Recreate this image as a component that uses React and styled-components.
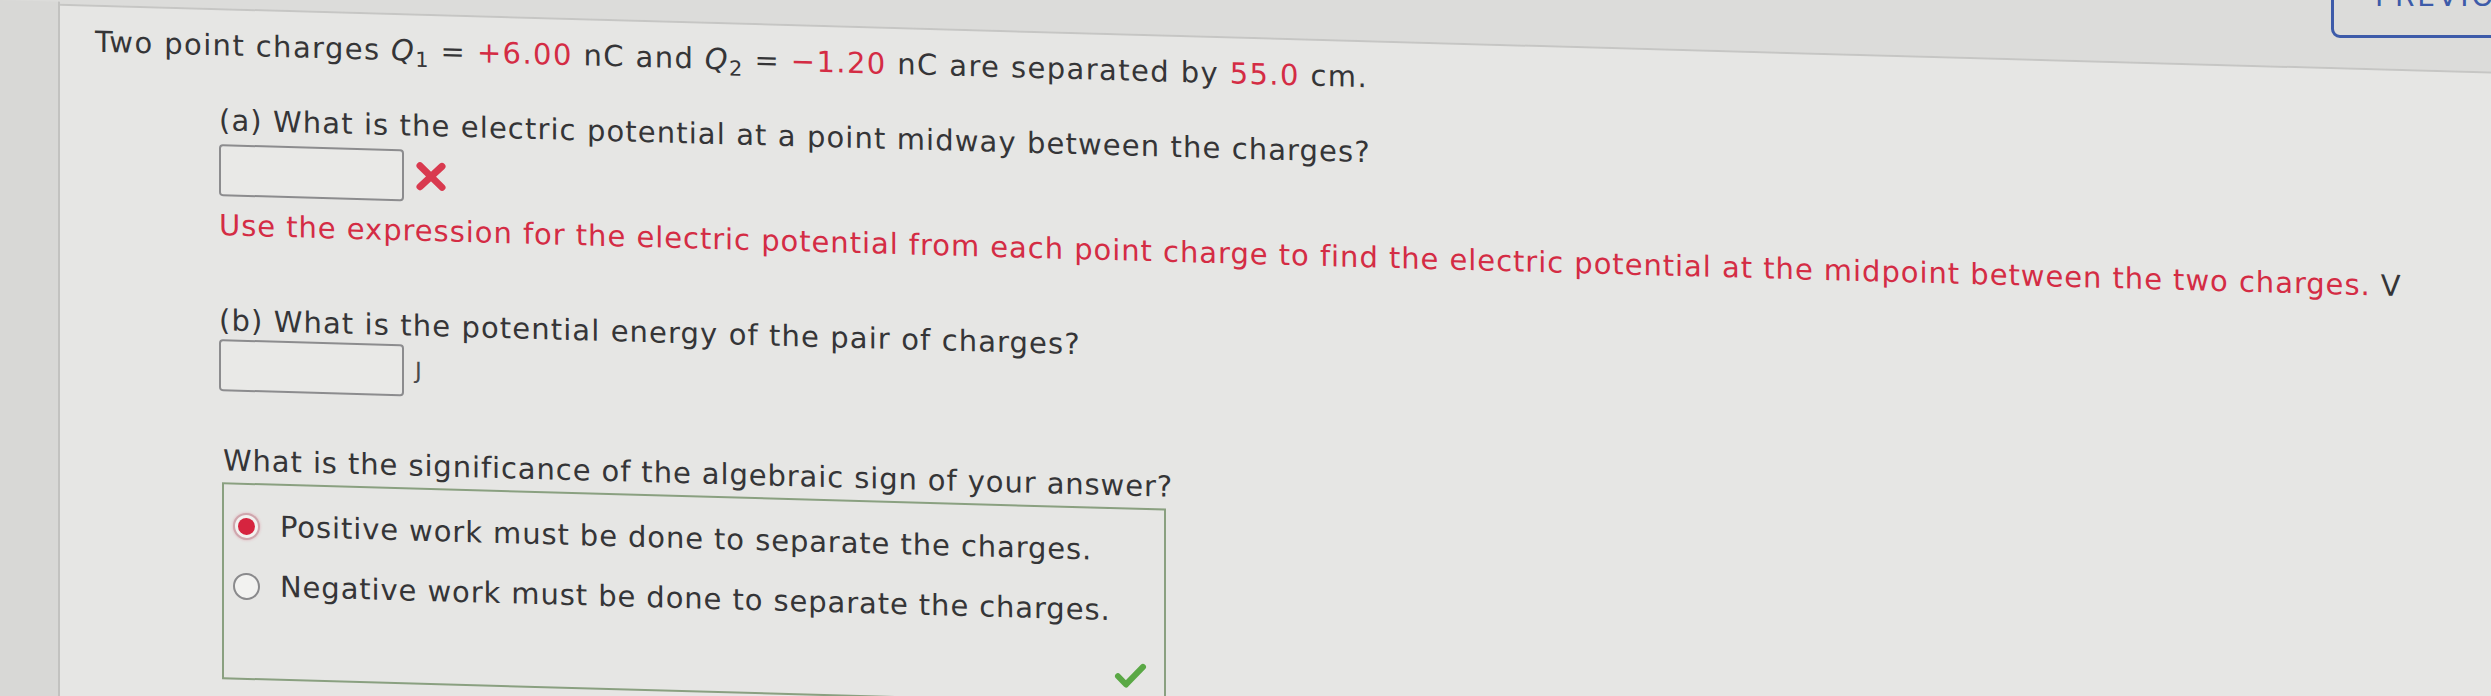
import React from 'react';
import styled, { createGlobalStyle } from 'styled-components';

const GlobalStyle = createGlobalStyle`
  html, body {
    margin: 0;
    padding: 0;
    width: 2491px;
    height: 696px;
    overflow: hidden;
    background: #dcdcda;
  }
  body {
    font-family: "DejaVu Sans", Verdana, sans-serif;
    color: #353537;
  }
`

const Screen = styled.div`
  position: relative;
  width: 2491px;
  height: 696px;
  overflow: hidden;
`

const Sheet = styled.div`
  display: flex;
  width: 2491px;
  height: 800px;
  transform: skewY(1.6deg);
  transform-origin: 0 0;
`

const Gutter = styled.div`
  width: 58px;
  flex-shrink: 0;
  background: #d8d8d6;
  border-right: 2px solid #c2c2c0;
`

const Main = styled.div`
  flex: 1;
  margin-top: 2px;
  border-top: 2px solid #c6c6c4;
  background: #e6e6e4;
  padding: 17px 0 0 35px;
`

const Line = styled.div`
  font-size: 29px;
  line-height: 36px;
  letter-spacing: ${p => p.$spacing ?? 1.1}px;
  white-space: nowrap;
  color: ${p => (p.$hint ? '#d42c44' : '#353537')};
`

const Part = styled.div`
  margin-left: 124px;
  margin-top: ${p => p.$top || 0}px;
`

const Var = styled.span`
  font-style: italic;
`

const Sub = styled.sub`
  font-size: 0.72em;
  line-height: 0;
  vertical-align: -0.3em;
  font-style: normal;
`

const Num = styled.span`
  color: #d42c44;
`

const Unit = styled.span`
  color: #353537;
`

const AnswerRow = styled.div`
  display: flex;
  align-items: center;
  gap: 11px;
  margin-top: ${p => p.$top || 0}px;
`

const AnswerBox = styled.div`
  width: 181px;
  height: 48px;
  border: 2px solid #8c8c8e;
  border-radius: 4px;
  background: #e9e9e7;
`

const UnitLabel = styled.span`
  font-size: 23px;
  color: #4a4a4c;
`

const Question = styled.div`
  margin-left: 4px;
`

const Choices = styled.div`
  display: flex;
  flex-direction: column;
  width: 944px;
  height: 197px;
  margin-top: 4px;
  margin-left: 3px;
  border: 2px solid #8aa080;
  padding: 11px 0 0 9px;
  box-sizing: border-box;
`

const Choice = styled.label`
  display: flex;
  align-items: center;
  gap: 20px;
  height: 60px;
  font-size: 29px;
  line-height: 36px;
  letter-spacing: 0.9px;
  white-space: nowrap;
`

const Radio = styled.span`
  width: 27px;
  height: 27px;
  box-sizing: border-box;
  border-radius: 50%;
  border: 2px solid ${p => (p.$on ? '#cfa6ad' : '#8a8a8c')};
  background: #f2f2f0;
  display: flex;
  align-items: center;
  justify-content: center;
  flex-shrink: 0;
  box-shadow: ${p => (p.$on ? '0 0 3px #e0b0b8' : 'none')};
`

const Dot = styled.span`
  width: 17px;
  height: 17px;
  border-radius: 50%;
  background: #d6243f;
`

const CheckWrap = styled.div`
  margin-top: auto;
  align-self: flex-end;
  margin-right: 17px;
  margin-bottom: 14px;
  display: flex;
`

const PrevButton = styled.div`
  position: absolute;
  top: -40px;
  right: -60px;
  width: 220px;
  height: 78px;
  box-sizing: border-box;
  border: 3px solid #3d5ba9;
  border-radius: 9px;
  padding: 17px 0 0 41px;
  font-size: 28px;
  line-height: 34px;
  letter-spacing: 3px;
  color: #3d5ba9;
  background: #dcdcda;
  white-space: nowrap;
`

const CrossIcon = () => (
  <svg width="32" height="31" viewBox="0 0 32 31">
    <path d="M5 5 L27 26 M27 5 L5 26" stroke="#d93a4f" strokeWidth="7" strokeLinecap="round" />
  </svg>
)

const CheckIcon = () => (
  <svg width="33" height="26" viewBox="0 0 33 26">
    <path d="M4 14 L12 22 L29 4" stroke="#5aa845" strokeWidth="6" fill="none" strokeLinecap="round" strokeLinejoin="round" />
  </svg>
)

const App = () => {
  return (
    <Screen>
      <GlobalStyle />
      <Sheet>
        <Gutter />
        <Main>
          <Line $spacing={1.4}>
            Two point charges <Var>Q<Sub>1</Sub></Var> = <Num>+6.00</Num> nC and{' '}
            <Var>Q<Sub>2</Sub></Var> = <Num>−1.20</Num> nC are separated by <Num>55.0</Num> cm.
          </Line>

          <Part $top={39}>
            <Line>(a) What is the electric potential at a point midway between the charges?</Line>
            <AnswerRow $top={6}>
              <AnswerBox />
              <CrossIcon />
            </AnswerRow>
            <Line $hint $spacing={0.95} style={{ marginTop: 11 }}>
              Use the expression for the electric potential from each point charge to find the electric
              potential at the midpoint between the two charges. <Unit>V</Unit>
            </Line>
          </Part>

          <Part $top={59}>
            <Line>(b) What is the potential energy of the pair of charges?</Line>
            <AnswerRow $top={1}>
              <AnswerBox />
              <UnitLabel>J</UnitLabel>
            </AnswerRow>
          </Part>

          <Part $top={51}>
            <Question>
              <Line $spacing={0.9}>What is the significance of the algebraic sign of your answer?</Line>
            </Question>
            <Choices>
              <Choice>
                <Radio $on><Dot /></Radio>
                Positive work must be done to separate the charges.
              </Choice>
              <Choice>
                <Radio />
                Negative work must be done to separate the charges.
              </Choice>
              <CheckWrap>
                <CheckIcon />
              </CheckWrap>
            </Choices>
          </Part>
        </Main>
      </Sheet>
      <PrevButton>PREVIOUS</PrevButton>
    </Screen>
  );
};

export default App;
